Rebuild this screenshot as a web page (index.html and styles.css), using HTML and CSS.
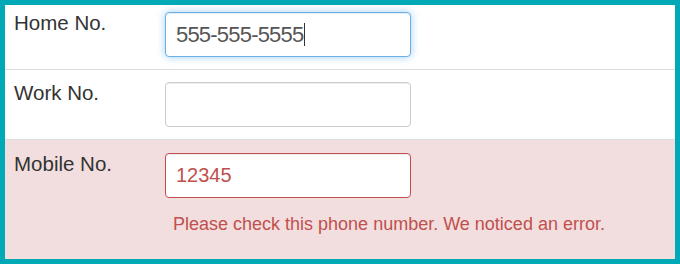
FILE: index.html
```html
<!DOCTYPE html>
<html>
<head>
<meta charset="utf-8">
<link rel="stylesheet" href="styles.css">
</head>
<body>
<div class="frame">
  <div class="row row-first">
    <div class="label">Home No.</div>
    <div class="field">
      <div class="input focus"><span class="val">555-555-5555</span><span class="caret"></span></div>
    </div>
  </div>
  <div class="row">
    <div class="label">Work No.</div>
    <div class="field">
      <div class="input"></div>
    </div>
  </div>
  <div class="row row-error">
    <div class="label">Mobile No.</div>
    <div class="field">
      <div class="input error"><span class="val">12345</span></div>
      <div class="help">Please check this phone number. We noticed an error.</div>
    </div>
  </div>
</div>
</body>
</html>
```
FILE: styles.css
```css
html, body {
  margin: 0;
  padding: 0;
  background: #ffffff;
}
.frame {
  width: 680px;
  height: 264px;
  box-sizing: border-box;
  border: 5px solid #00a9b5;
  display: flex;
  flex-direction: column;
  font-family: "Liberation Sans", Arial, sans-serif;
  color: #333333;
  overflow: hidden;
}
.row {
  display: flex;
  padding: 12px 0 12px 0;
  border-bottom: 1px solid #dddddd;
}
.row-first {
  padding-top: 7px;
}
.row-error {
  flex: 1;
  padding-top: 13px;
  border-bottom: none;
  background: #f2dede;
}
.label {
  width: 151px;
  padding-left: 9px;
  font-size: 20.5px;
  line-height: 22px;
  color: #333333;
}
.field {
  display: flex;
  flex-direction: column;
}
.input {
  width: 246px;
  height: 45px;
  box-sizing: border-box;
  border: 1px solid #cccccc;
  border-radius: 4px;
  background: #ffffff;
  padding: 0 10px;
  display: flex;
  align-items: center;
  box-shadow: inset 0 1px 1px rgba(0, 0, 0, 0.075);
}
.input.focus {
  border-color: #66afe9;
  box-shadow: inset 0 1px 1px rgba(0, 0, 0, 0.075), 0 0 8px rgba(102, 175, 233, 0.6);
}
.input.error {
  border-color: #c0504d;
}
.val {
  font-size: 22px;
  letter-spacing: -0.8px;
  color: #555555;
}
.input.error .val {
  font-size: 20px;
  letter-spacing: 0;
  color: #c0504d;
}
.caret {
  display: block;
  width: 1px;
  height: 23px;
  background: #333333;
  margin-left: 1px;
}
.help {
  margin-top: 16px;
  padding-left: 8px;
  font-size: 18px;
  line-height: 20px;
  color: #c0504d;
}
```
